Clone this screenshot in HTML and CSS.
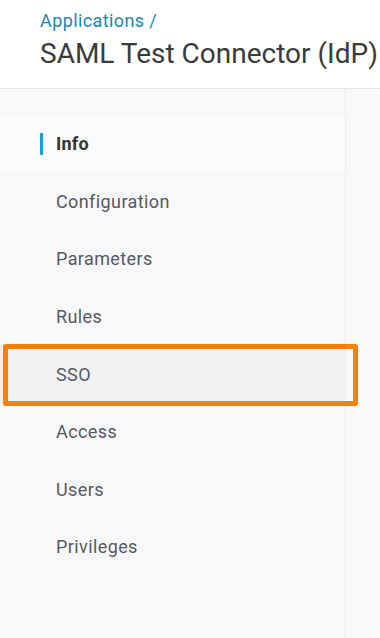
FILE: index.html
```html
<!DOCTYPE html>
<html lang="en">
<head>
<meta charset="utf-8">
<title>SAML Test Connector (IdP)</title>
<link rel="stylesheet" href="styles.css">
</head>
<body>
  <header class="page-header">
    <a class="crumb" href="#">Applications /</a>
    <h1 class="title">SAML Test Connector (IdP)</h1>
  </header>
  <div class="layout">
    <nav class="sidebar">
      <ul class="nav">
        <li class="nav-item active"><span class="bar"></span>Info</li>
        <li class="nav-item">Configuration</li>
        <li class="nav-item">Parameters</li>
        <li class="nav-item">Rules</li>
        <li class="nav-item hover">SSO<span class="highlight"></span></li>
        <li class="nav-item">Access</li>
        <li class="nav-item">Users</li>
        <li class="nav-item">Privileges</li>
      </ul>
    </nav>
    <main class="content"></main>
  </div>
</body>
</html>
```
FILE: styles.css
```css
* { box-sizing: border-box; }
html, body {
  margin: 0;
  padding: 0;
  height: 100%;
}
body {
  font-family: Roboto, "Liberation Sans", Arial, sans-serif;
  background: #ffffff;
  display: flex;
  flex-direction: column;
  overflow: hidden;
}
.page-header {
  height: 89px;
  padding: 9px 0 0 40px;
  border-bottom: 1px solid #e4e5e7;
  background: #ffffff;
  white-space: nowrap;
}
.crumb {
  display: block;
  color: #1b88b3;
  font-size: 18px;
  line-height: 24px;
  letter-spacing: 0.4px;
  text-decoration: none;
}
.title {
  margin: 4px 0 0;
  font-size: 28px;
  line-height: 34px;
  font-weight: 400;
  color: #3b3b3b;
}
.layout {
  flex: 1;
  display: flex;
}
.sidebar {
  width: 346px;
  flex: none;
  background: #f7f8fa;
  border-right: 1px solid #eaecef;
}
.nav {
  list-style: none;
  margin: 0;
  padding: 26px 0 0;
}
.nav-item {
  position: relative;
  height: 57.6px;
  display: flex;
  align-items: center;
  padding-left: 56px;
  font-size: 18px;
  letter-spacing: 0.4px;
  color: #555a62;
}
.nav-item.active {
  padding-left: 40px;
  background: #fafbfc;
  font-weight: 700;
  letter-spacing: 0.2px;
  color: #343434;
}
.bar {
  width: 3px;
  height: 22px;
  margin-right: 13px;
  background: #00a3e0;
}
.nav-item.hover {
  background: #f2f2f2;
}
.highlight {
  position: absolute;
  top: -1.5px;
  left: 3px;
  right: -13px;
  height: 62px;
  border: 5px solid #ff8000;
  border-radius: 3px;
}
.content {
  flex: 1;
  background: #f8f9fa;
}
```
